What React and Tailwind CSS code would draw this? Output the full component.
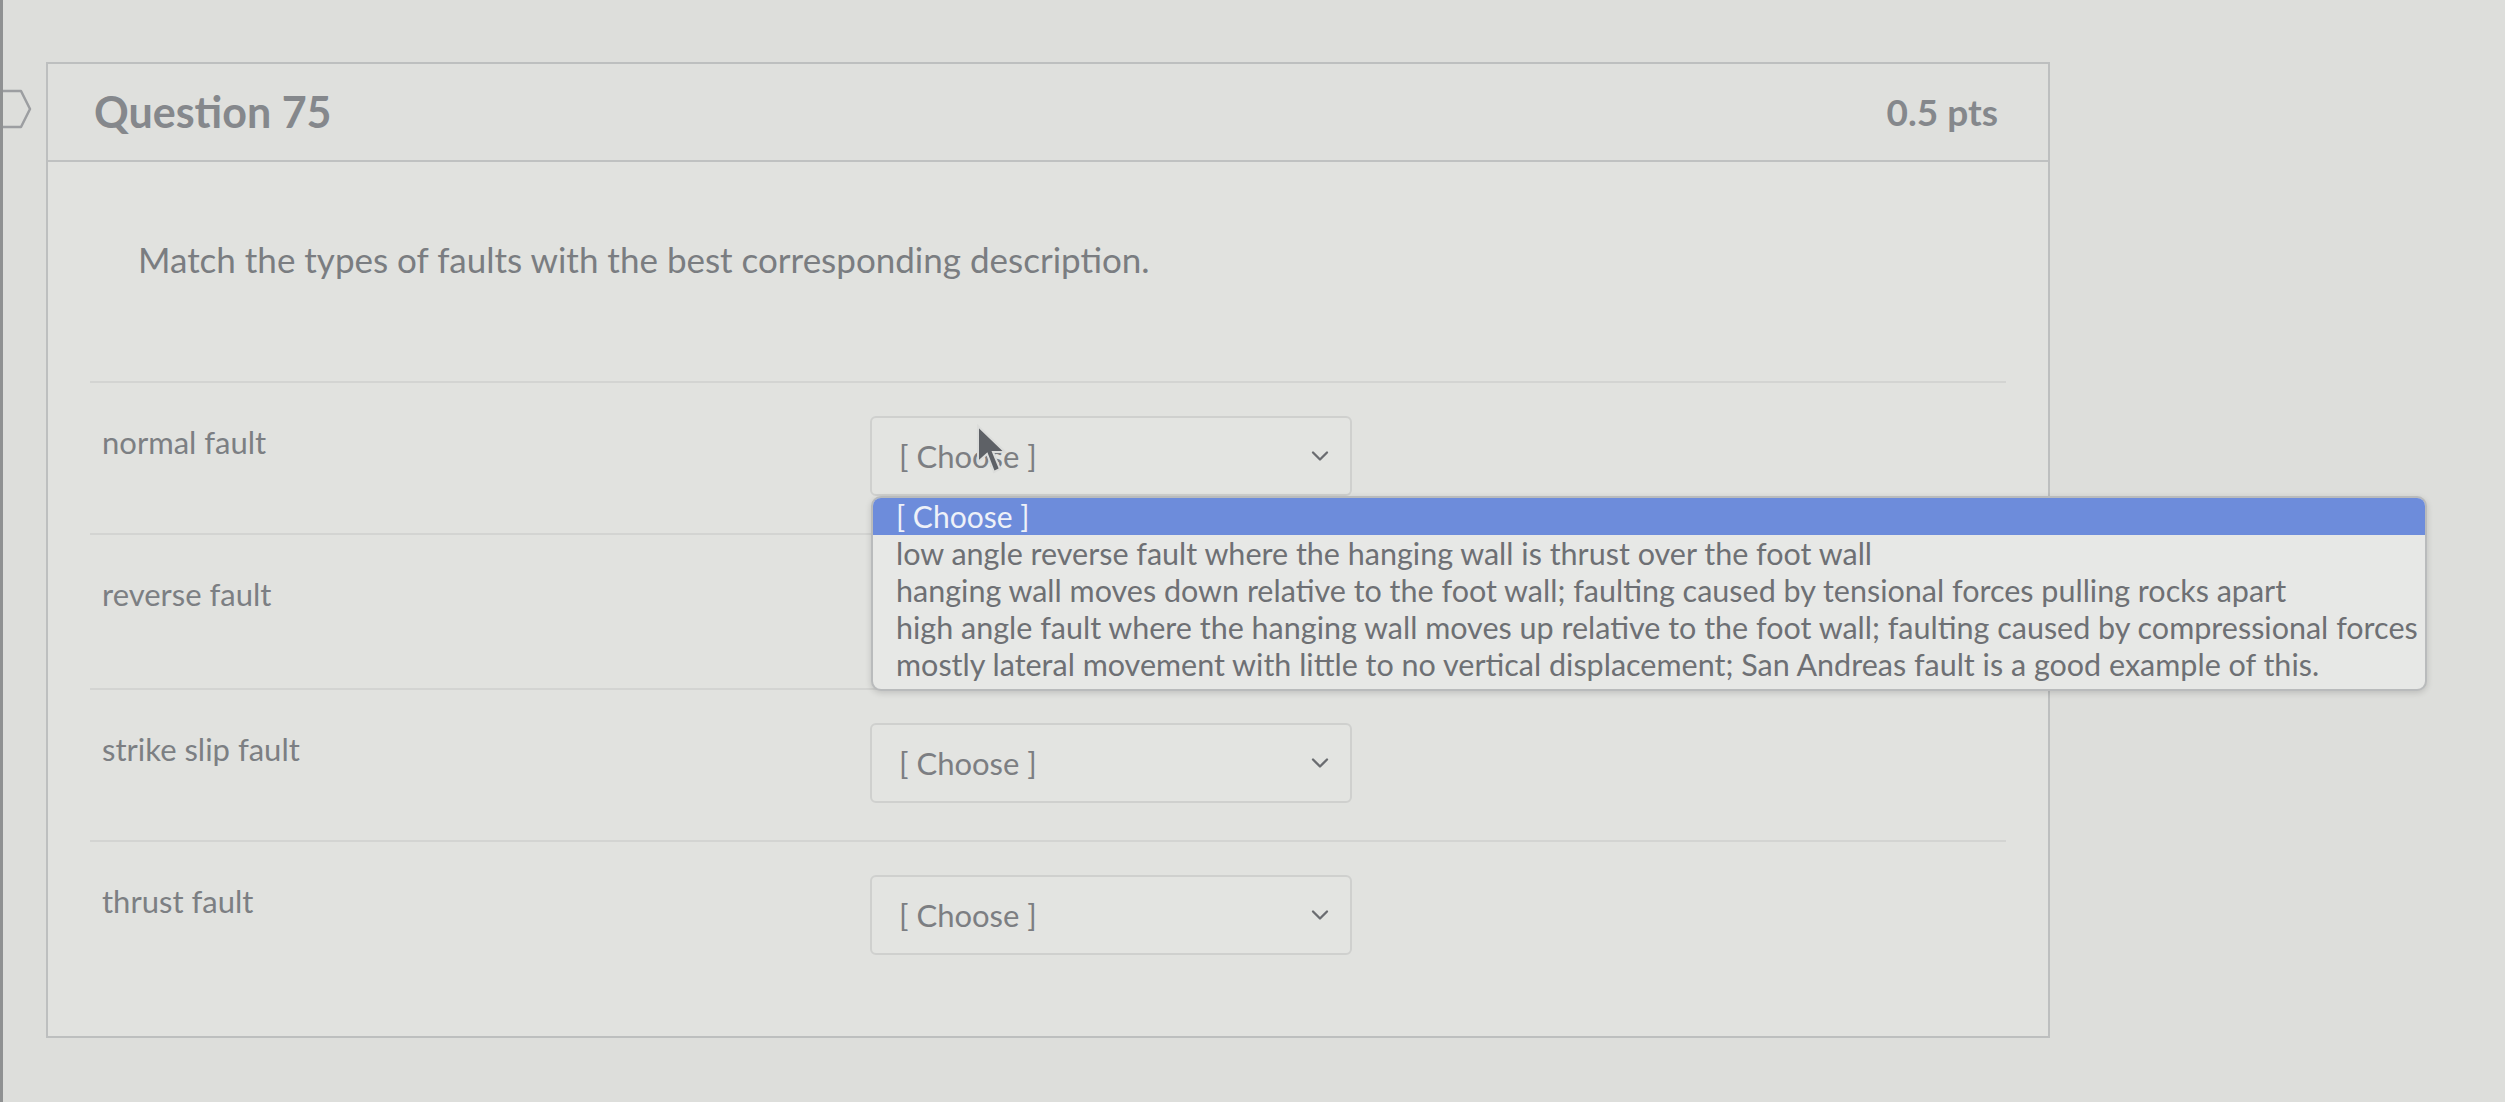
import { ChevronDown } from "lucide-react"

const options = [
  "low angle reverse fault where the hanging wall is thrust over the foot wall",
  "hanging wall moves down relative to the foot wall; faulting caused by tensional forces pulling rocks apart",
  "high angle fault where the hanging wall moves up relative to the foot wall; faulting caused by compressional forces",
  "mostly lateral movement with little to no vertical displacement; San Andreas fault is a good example of this.",
]

function Select({ open }) {
  return (
    <div className="relative w-[482px]">
      <div className="flex h-[80px] items-center justify-between rounded-[6px] border-2 border-[#cfd0ce] bg-[#e3e4e1] pl-[27px] pr-[16px]">
        <span className="text-[31px] text-[#7c7e82]">[ Choose ]</span>
        <ChevronDown size={28} strokeWidth={2} className="text-[#6a6c70]" />
      </div>

      {/* cursor */}
      {open && (
        <svg className="absolute left-[106px] top-[8px]" width="34" height="52" viewBox="0 0 34 52">
          <path d="M2 2 L2 38 L11 30 L18 48 L24 45 L17 28 L29 28 Z" fill="#5e6166" stroke="#dcdddb" strokeWidth="2" />
        </svg>
      )}

      {/* open dropdown */}
      {open && (
        <div className="absolute left-[1px] top-full z-10 w-[1556px] overflow-hidden rounded-[10px] border-2 border-[#b9bbbc] bg-[#e7e8e6] pb-[6px] shadow-[0_2px_6px_rgba(0,0,0,0.15)]">
          <div className="h-[37px] bg-[#6d8cdb] pl-[23px] text-[30px] leading-[37px] text-[#eef1f8]">[ Choose ]</div>
          {options.map((o) => (
            <div key={o} className="h-[37px] whitespace-nowrap pl-[23px] text-[30.5px] leading-[37px] text-[#6e7074]">
              {o}
            </div>
          ))}
        </div>
      )}
    </div>
  )
}

const rows = [
  { label: "normal fault", open: true, h: "h-[152px]" },
  { label: "reverse fault", open: false, hidden: true, h: "h-[155px]" },
  { label: "strike slip fault", open: false, h: "h-[152px]" },
  { label: "thrust fault", open: false, h: "h-[196px]" },
]

export default function App() {
  return (
    <div className="relative h-[1102px] overflow-hidden border-l-[3px] border-[#8f9192] bg-[#dddedb] font-['Lato',sans-serif]">
      {/* question flag */}
      <svg className="absolute left-[-16px] top-[88px]" width="46" height="42" viewBox="0 0 46 42">
        <path d="M2 3 H34 L43 21 L34 39 H2 Z" fill="none" stroke="#9c9ea1" strokeWidth="2.5" strokeLinejoin="round" />
      </svg>

      <div className="ml-[43px] mt-[62px] w-[2004px] border-2 border-[#bdbfbf] bg-[#e1e2df]">
        <div className="flex h-[98px] items-center justify-between border-b-2 border-[#bfc1c1] bg-[#dfe0dd] pl-[46px] pr-[50px]">
          <h2 className="text-[43px] font-bold text-[#85888c]">Question 75</h2>
          <span className="text-[37px] font-bold text-[#85888c]">0.5 pts</span>
        </div>

        <div className="px-[42px] pt-[76px]">
          <p className="pl-[48px] text-[35px] leading-[42px] text-[#7a7d81]">
            Match the types of faults with the best corresponding description.
          </p>

          <div className="mt-[101px]">
            {rows.map((r) => (
              <div key={r.label} className={`flex border-t-2 border-[#d3d4d2] ${r.h}`}>
                <div className="w-[780px] pl-[12px] pt-[40px] text-[31px] leading-[38px] text-[#7c7f83]">{r.label}</div>
                {!r.hidden && (
                  <div className="pt-[33px]">
                    <Select open={r.open} />
                  </div>
                )}
              </div>
            ))}
          </div>
        </div>
      </div>
    </div>
  )
}
